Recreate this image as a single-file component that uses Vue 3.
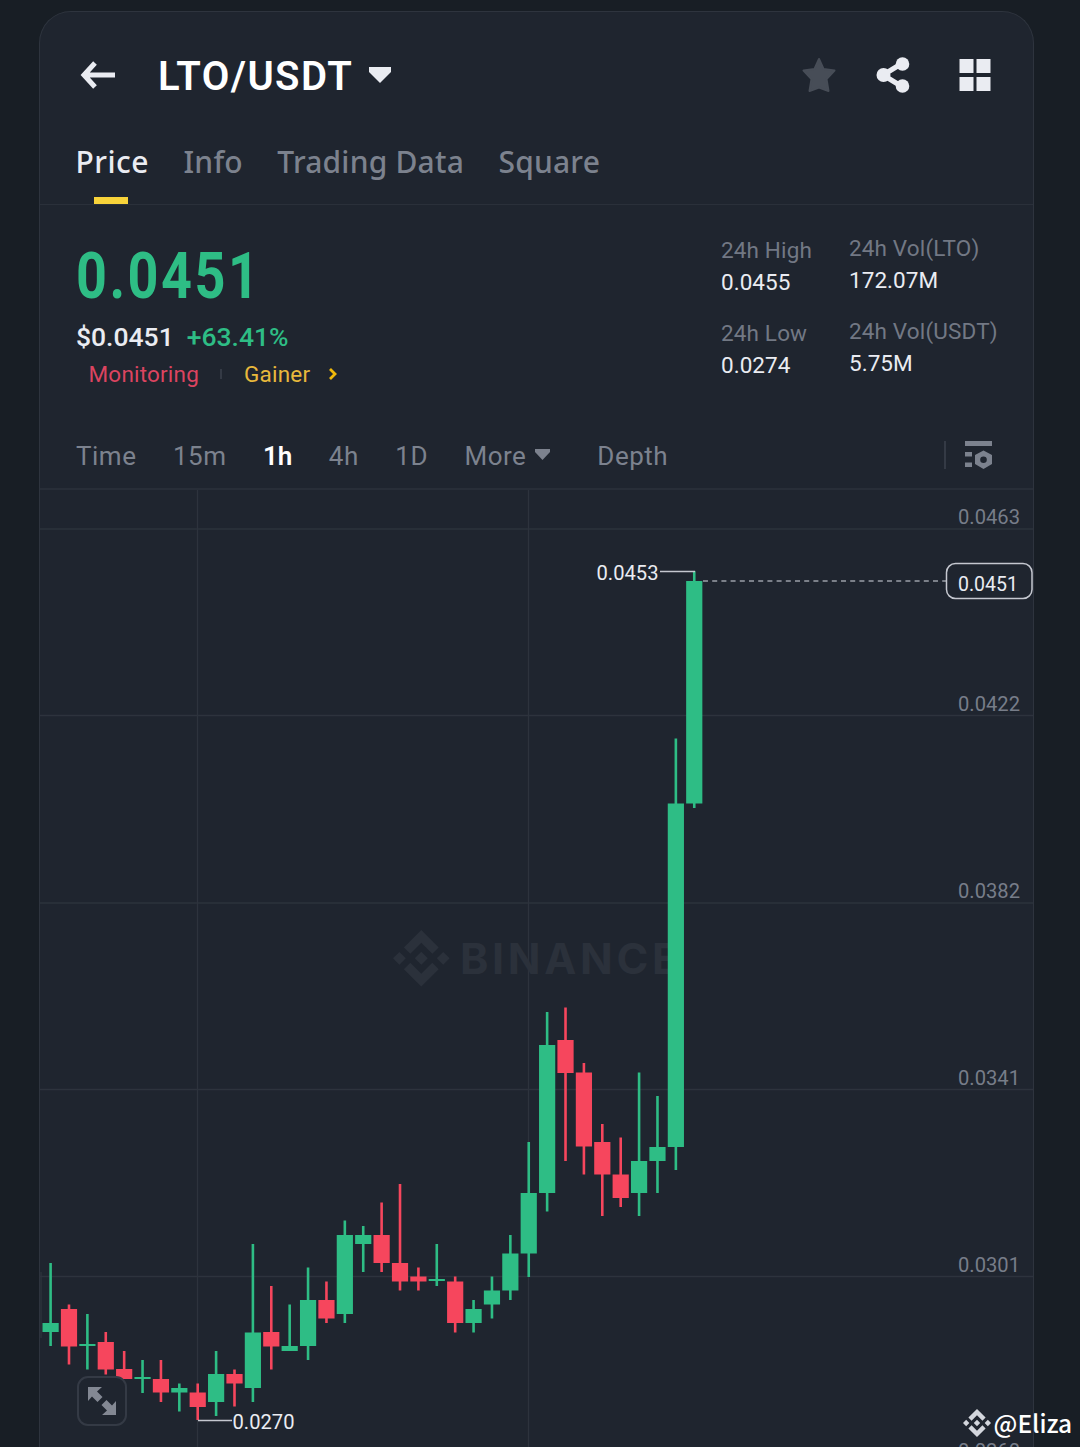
<script setup>
import { ref } from 'vue'

const tabs = ['Price', 'Info', 'Trading Data', 'Square']
const activeTab = ref('Price')

const intervals = ['Time', '15m', '1h', '4h', '1D', 'More', 'Depth']
const activeInterval = ref('1h')

const stats = [
  [
    { label: '24h High', value: '0.0455' },
    { label: '24h Low', value: '0.0274' },
  ],
  [
    { label: '24h Vol(LTO)', value: '172.07M' },
    { label: '24h Vol(USDT)', value: '5.75M' },
  ],
]

const axis = [
  { y: 39, label: '0.0463' },
  { y: 225.5, label: '0.0422' },
  { y: 413, label: '0.0382' },
  { y: 599.5, label: '0.0341' },
  { y: 786.5, label: '0.0301' },
  { y: 973, label: '0.0260' },
]

// [direction, high, body top, body bottom, low] in chart units
const series = [
  ['up', 773, 833, 842, 856],
  ['down', 814.5, 819, 856.5, 874.5],
  ['up', 824, 854, 856, 879.5],
  ['down', 842, 852, 879.5, 884.5],
  ['down', 861, 879, 889, 889],
  ['up', 870, 887, 889, 903],
  ['down', 870, 889, 902.5, 912],
  ['up', 893.5, 898, 902.5, 921.5],
  ['down', 893.5, 902.5, 917, 930],
  ['up', 861, 884, 912, 926],
  ['down', 879.5, 884, 893.5, 916.5],
  ['up', 754, 842.5, 898, 912],
  ['down', 796, 842, 856.5, 879.5],
  ['up', 814.5, 856, 861, 861],
  ['up', 777.5, 810, 856, 870],
  ['down', 791.5, 810, 828.5, 833],
  ['up', 730.5, 745, 824, 833],
  ['up', 736, 745, 754, 782],
  ['down', 712.5, 745, 773, 782],
  ['down', 694, 773, 791.5, 800.5],
  ['down', 777.5, 786.5, 791.5, 800.5],
  ['up', 754, 789, 791, 796],
  ['down', 786.5, 791.5, 833, 842.5],
  ['up', 810, 819, 833, 842.5],
  ['up', 786.5, 800.5, 814.5, 828.5],
  ['up', 745, 763.5, 800.5, 810],
  ['up', 652, 703, 763.5, 787],
  ['up', 522, 555, 703, 721.5],
  ['down', 517.5, 550, 583, 671],
  ['down', 573, 582.5, 656.5, 684.5],
  ['down', 634, 652, 684.5, 726],
  ['down', 647.5, 684.5, 708, 717],
  ['up', 582.5, 671, 703, 726],
  ['up', 606, 657, 671, 703],
  ['up', 248.5, 313.5, 657, 680],
  ['up', 81, 91, 313.5, 318],
]

const candles = series.map(([dir, high, top, bottom, low], i) => ({
  dir,
  high,
  top,
  low,
  x: 10.6 + i * 18.39,
  height: bottom - top,
}))

const logo =
  'M38.7 53.2 63.3 28.6 87.9 53.2 102.2 38.9 63.3 0 24.4 38.9ZM0 63.3 14.3 49 28.6 63.3 14.3 77.6ZM38.7 73.4 63.3 98 87.9 73.4 102.2 87.7 63.3 126.6 24.4 87.7ZM98 63.3 112.3 49 126.6 63.3 112.3 77.6ZM77.8 63.3 63.3 48.8 48.8 63.3 63.3 77.8Z'
</script>

<template>
  <div class="screen">
    <main class="panel">
      <header class="header">
        <svg class="header__back" viewBox="0 0 36 28">
          <path d="M15 2 4 14l11 12M4 14h31" />
        </svg>
        <h1 class="header__title">LTO/USDT</h1>
        <svg class="header__caret" viewBox="0 0 22 16">
          <path d="M0 0h22v5L11 16 0 5Z" />
        </svg>
        <svg class="header__star" viewBox="0 0 34 36">
          <path
            d="M17 2l4.500 10 11 1.500-8 8.500 2 12L17 30.500 7.500 34l2-12-8-8.500 11-1.500Z"
          />
        </svg>
        <svg class="header__share" viewBox="0 0 34 36">
          <path d="M7 18 25 7M7 18l18 11" />
          <circle cx="7.500" cy="18" r="7" />
          <circle cx="26.500" cy="7" r="6.800" />
          <circle cx="26.500" cy="29" r="6.800" />
        </svg>
        <svg class="header__grid" viewBox="0 0 31 32">
          <path d="M0 0h14v14H0ZM17 0h14v14H17ZM0 18h14v14H0ZM17 18h14v14H17Z" />
        </svg>
      </header>

      <nav class="tabs">
        <button
          v-for="tab in tabs"
          :key="tab"
          class="tabs__item"
          :class="{ 'tabs__item--active': tab === activeTab }"
          @click="activeTab = tab"
        >
          {{ tab }}
        </button>
      </nav>

      <section class="summary">
        <div class="summary__main">
          <div class="summary__price">0.0451</div>
          <div class="summary__change">
            <span class="summary__fiat">$0.0451</span>
            <span class="summary__percent">+63.41%</span>
          </div>
          <div class="tags">
            <span class="tags__monitoring">Monitoring</span>
            <i class="tags__divider"></i>
            <span class="tags__gainer">Gainer</span>
            <svg class="tags__arrow" viewBox="0 0 10 14">
              <path d="M2 2l5 5-5 5" />
            </svg>
          </div>
        </div>
        <div class="stats">
          <div v-for="(column, i) in stats" :key="i" class="stats__column">
            <div v-for="item in column" :key="item.label" class="stats__item">
              <span class="stats__label">{{ item.label }}</span>
              <span class="stats__value">{{ item.value }}</span>
            </div>
          </div>
        </div>
      </section>

      <nav class="intervals">
        <button
          v-for="item in intervals"
          :key="item"
          class="intervals__item"
          :class="{ 'intervals__item--active': item === activeInterval, 'intervals__item--more': item === 'More' }"
          @click="activeInterval = item"
        >
          {{ item }}
          <svg v-if="item === 'More'" class="intervals__caret" viewBox="0 0 15 11">
            <path d="M0 0h15v3L7.500 11 0 3Z" />
          </svg>
        </button>
        <i class="intervals__divider"></i>
        <svg class="intervals__settings" viewBox="0 0 27 28">
          <path d="M0 0h27v5H0ZM0 11h7v4.500H0ZM0 21.500h7V26H0Z" />
          <path
            fill-rule="evenodd"
            d="M18.500 9.500 27 14v9l-8.500 5-8.500-5v-9ZM18.500 15.500a3.300 3.300 0 1 0 0 6.600 3.300 3.300 0 0 0 0-6.600Z"
          />
        </svg>
      </nav>

      <svg class="chart" viewBox="0 0 993 957">
        <g class="chart__grid">
          <line v-for="row in axis" :key="row.y" x1="0" x2="993" :y1="row.y" :y2="row.y" />
          <line x1="157.500" x2="157.500" y1="0" y2="957" />
          <line x1="488.500" x2="488.500" y1="0" y2="957" />
          <line x1="1" x2="1" y1="782" y2="848" />
        </g>

        <g class="chart__brand">
          <path :d="logo" transform="translate(353 440) scale(0.447)" />
          <text x="420" y="484" textLength="218">BINANCE</text>
        </g>

        <text
          v-for="row in axis"
          :key="row.label"
          class="chart__label"
          x="918"
          :y="row.y - 5"
          textLength="62"
          lengthAdjust="spacingAndGlyphs"
        >
          {{ row.label }}
        </text>

        <g v-for="(candle, i) in candles" :key="i" :class="`candle candle--${candle.dir}`">
          <line :x1="candle.x" :x2="candle.x" :y1="candle.high" :y2="candle.low" />
          <rect :x="candle.x - 8.100" :y="candle.top" width="16.200" :height="candle.height" />
        </g>

        <path class="chart__pointer" d="M620 81.500h35M158 930.500h34" />
        <text class="chart__mark" x="556.500" y="89.500" textLength="62" lengthAdjust="spacingAndGlyphs">0.0453</text>
        <text class="chart__mark" x="192.500" y="939" textLength="62" lengthAdjust="spacingAndGlyphs">0.0270</text>

        <line class="chart__current" x1="663" x2="906" y1="91" y2="91" />
        <rect class="chart__tag" x="906.500" y="73.500" width="85.500" height="35" rx="9" />
        <text class="chart__mark" x="918" y="101" textLength="60" lengthAdjust="spacingAndGlyphs">0.0451</text>

        <g class="chart__expand">
          <rect x="38" y="887" width="48" height="48" rx="10" />
          <path d="M48 897h14l-5 4.500 5.500 5.500-5 5-5.500-5.500-4 4.500ZM76 925H62l5-4.500-5.500-5.500 5-5 5.500 5.500 4-4.500Z" />
        </g>
      </svg>
    </main>

    <div class="author">
      <svg class="author__logo" viewBox="0 0 126.600 126.600">
        <path :d="logo" />
      </svg>
      <span>@Eliza</span>
    </div>
  </div>
</template>

<style>
body {
  margin: 0;
  background: #181e25;
}
</style>

<style scoped>
.screen {
  position: relative;
  box-sizing: border-box;
  width: 1080px;
  height: 1447px;
  padding: 11px 46px 0 39px;
  overflow: hidden;
  background: #181e25;
  color: #eaecf2;
  font-family: Roboto, sans-serif;
}

.panel {
  box-sizing: border-box;
  height: 1436px;
  border: 1px solid #2e343e;
  border-bottom: 0;
  border-radius: 32px 32px 0 0;
  background: #1f252f;
  overflow: hidden;
}

button {
  padding: 0;
  border: 0;
  background: none;
  color: inherit;
  font: inherit;
  letter-spacing: inherit;
  cursor: pointer;
}

.header {
  display: flex;
  align-items: center;
  height: 126px;
  padding: 0 42px 0 40px;
  fill: #eaecf2;
}

.header__back {
  width: 36px;
  height: 28px;
  fill: none;
  stroke: #eaecf2;
  stroke-width: 5;
}

.header__title {
  width: 197px;
  margin: 3px 14px 0 42px;
  color: #fff;
  font-size: 40px;
  font-weight: 600;
  line-height: 50px;
  letter-spacing: 1.4px;
  white-space: nowrap;
}

.header__caret {
  width: 22px;
  height: 16px;
}

.header__star {
  width: 34px;
  height: 36px;
  margin-left: auto;
  fill: #474d57;
  stroke: #474d57;
  stroke-width: 2;
  stroke-linejoin: round;
}

.header__share {
  width: 34px;
  height: 36px;
  margin: 0 49px 0 40px;
}

.header__share path {
  stroke: #eaecf2;
  stroke-width: 5;
}

.header__grid {
  width: 32px;
  height: 32px;
}

.tabs {
  display: flex;
  gap: 34.5px;
  box-sizing: border-box;
  height: 67px;
  padding-left: 35.5px;
  border-bottom: 1px solid #2a303a;
  color: #7c828e;
  font-family: 'Noto Sans', sans-serif;
  font-size: 30px;
  font-weight: 500;
  letter-spacing: 0.2px;
}

.tabs__item {
  position: relative;
  height: 48px;
  line-height: 48px;
  white-space: nowrap;
}

.tabs__item--active {
  color: #eaecf2;
  letter-spacing: 0.5px;
}

.tabs__item--active::after {
  content: '';
  position: absolute;
  top: 59px;
  left: 50%;
  width: 34px;
  height: 7px;
  margin-left: -18px;
  background: #f8d33a;
}

.summary {
  display: flex;
  justify-content: space-between;
  box-sizing: border-box;
  height: 218px;
  padding: 40px 32px 0 36px;
}

.summary__price {
  color: #2ebd85;
  font-size: 65px;
  font-weight: 700;
  line-height: 62px;
  letter-spacing: 3px;
  transform: scaleX(0.83);
  transform-origin: left;
}

.summary__change {
  display: flex;
  gap: 13px;
  margin-top: 14px;
  font-size: 26.5px;
  font-weight: 500;
  line-height: 32px;
}

.summary__percent {
  color: #2ebd85;
}

.tags {
  display: flex;
  align-items: center;
  height: 36px;
  margin-top: 3px;
  padding-left: 12.5px;
  font-size: 22.5px;
  letter-spacing: 0.2px;
}

.tags__monitoring {
  color: #dc4460;
}

.tags__divider {
  width: 2px;
  height: 10px;
  margin: 0 22px 0 21px;
  background: #343a45;
}

.tags__gainer {
  color: #e8b83c;
}

.tags__arrow {
  width: 10px;
  height: 14px;
  margin-left: 18px;
  fill: none;
  stroke: #f0b90b;
  stroke-width: 2.8;
}

.stats {
  display: grid;
  grid-template-columns: 128px 152px;
  margin-top: -13px;
}

.stats__column {
  display: flex;
  flex-direction: column;
  gap: 19px;
}

.stats__column:first-child {
  padding-top: 2px;
}

.stats__item {
  display: flex;
  flex-direction: column;
}

.stats__label,
.stats__value {
  font-size: 22.5px;
  line-height: 32px;
  white-space: nowrap;
}

.stats__label {
  color: #727884;
  letter-spacing: 0.15px;
}

.stats__value {
  letter-spacing: 0.05px;
}

.intervals {
  display: flex;
  align-items: center;
  box-sizing: border-box;
  height: 67px;
  padding: 0 41px 0 36px;
  border-bottom: 2px solid #282e38;
  color: #7c828e;
  font-size: 26px;
  letter-spacing: 0.5px;
}

.intervals__item {
  margin-right: 36.5px;
  text-align: left;
  white-space: nowrap;
}

.intervals__item--active {
  color: #fff;
  font-weight: 600;
  letter-spacing: 0;
}

.intervals__item--more {
  margin-right: 47px;
}

.intervals__caret {
  width: 15px;
  height: 11px;
  margin: 0 0 5px 2px;
  fill: #7c828e;
}

.intervals__divider {
  width: 2px;
  height: 28px;
  margin: 0 19px 2px auto;
  background: #343a45;
}

.intervals__settings {
  width: 27px;
  height: 28px;
  margin-bottom: 2px;
  fill: #7c828e;
}

.chart {
  display: block;
  width: 993px;
  height: 957px;
  font-size: 21px;
}

.chart__grid line {
  stroke: #2d333d;
  stroke-width: 1.3;
}

.chart__brand {
  fill: #2b313b;
  font: 700 43px Inter, sans-serif;
}

.chart__label {
  fill: #777d89;
}

.chart__mark {
  fill: #eaecf2;
}

.candle--up {
  fill: #2ebd85;
  stroke: #2ebd85;
}

.candle--down {
  fill: #f6465d;
  stroke: #f6465d;
}

.candle line {
  stroke-width: 2.6;
}

.candle rect {
  stroke: none;
}

.chart__pointer {
  fill: none;
  stroke: #c5c8d0;
  stroke-width: 1.5;
}

.chart__current {
  stroke: #9a9ea8;
  stroke-width: 1.6;
  stroke-dasharray: 5 4.2;
}

.chart__tag {
  fill: #1f252f;
  stroke: #c5c8d0;
  stroke-width: 1.5;
}

.chart__expand rect {
  fill: #1f252f;
  stroke: #343a45;
  stroke-width: 2;
}

.chart__expand path {
  fill: #838893;
}

.author {
  position: absolute;
  right: 8px;
  bottom: 7px;
  display: flex;
  align-items: center;
  gap: 3px;
  color: #fff;
  font: 500 24.5px/34px 'Noto Sans CJK SC', sans-serif;
}

.author__logo {
  width: 28px;
  height: 28px;
  fill: #d3d6dd;
}
</style>
